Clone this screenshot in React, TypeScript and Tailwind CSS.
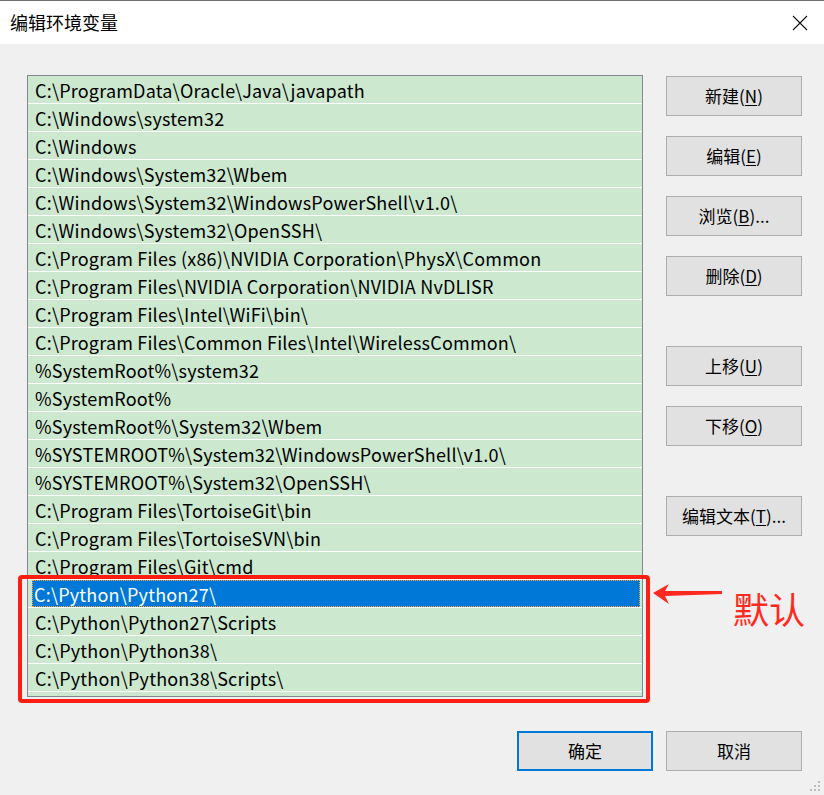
import React from "react";

const paths = [
  "C:\\ProgramData\\Oracle\\Java\\javapath",
  "C:\\Windows\\system32",
  "C:\\Windows",
  "C:\\Windows\\System32\\Wbem",
  "C:\\Windows\\System32\\WindowsPowerShell\\v1.0\\",
  "C:\\Windows\\System32\\OpenSSH\\",
  "C:\\Program Files (x86)\\NVIDIA Corporation\\PhysX\\Common",
  "C:\\Program Files\\NVIDIA Corporation\\NVIDIA NvDLISR",
  "C:\\Program Files\\Intel\\WiFi\\bin\\",
  "C:\\Program Files\\Common Files\\Intel\\WirelessCommon\\",
  "%SystemRoot%\\system32",
  "%SystemRoot%",
  "%SystemRoot%\\System32\\Wbem",
  "%SYSTEMROOT%\\System32\\WindowsPowerShell\\v1.0\\",
  "%SYSTEMROOT%\\System32\\OpenSSH\\",
  "C:\\Program Files\\TortoiseGit\\bin",
  "C:\\Program Files\\TortoiseSVN\\bin",
  "C:\\Program Files\\Git\\cmd",
  "C:\\Python\\Python27\\",
  "C:\\Python\\Python27\\Scripts",
  "C:\\Python\\Python38\\",
  "C:\\Python\\Python38\\Scripts\\",
];

const SELECTED = 18;

function Btn({ label, hot, rest, mt, primary }: { label: string; hot?: string; rest?: string; mt: string; primary?: boolean }) {
  return (
    <button
      className={`${mt} w-[136px] h-[40px] bg-[#e1e1e1] flex items-center justify-center text-[17px] text-black ${
        primary ? "border-2 border-[#0078d7]" : "border border-[#adadad]"
      }`}
    >
      <span>
        {label}
        {hot && (
          <>
            (<span className="underline underline-offset-2">{hot}</span>)
          </>
        )}
        {rest}
      </span>
    </button>
  );
}

export default function App() {
  return (
    <div
      className="relative w-[824px] h-[795px] bg-[#f0f0f0] border-t border-[#707070] overflow-hidden"
      style={{ fontFamily: '"Noto Sans CJK SC", "Noto Sans", sans-serif' }}
    >
      {/* title bar */}
      <div className="h-[43px] bg-white flex items-center justify-between pl-[10px] pr-[16px]">
        <span className="text-[18px] text-black">编辑环境变量</span>
        <svg width="16" height="16" viewBox="0 0 16 16" className="mt-[1px]">
          <path d="M1 1 L15 15 M15 1 L1 15" stroke="#111" strokeWidth="1.1" />
        </svg>
      </div>

      <div className="flex pt-[31px] pl-[27px]">
        <div className="w-[616px] h-[622px] border border-[#828790] bg-[#cce8cf]">
          {paths.map((p, i) => (
            <div key={i} className="h-[28px] px-[1px] border-b border-white">
              {i === SELECTED ? (
                <div className="h-full flex items-center ml-[3px] mr-[1px] pl-[2px] text-[18px] tracking-[0.2px] leading-none bg-[#0078d7] text-white outline-1 outline-dotted outline-[#f5a33c] -outline-offset-1">
                  {p}
                </div>
              ) : (
                <div className="h-full flex items-center pl-[6px] text-[18px] tracking-[0.2px] leading-none text-black">
                  {p}
                </div>
              )}
            </div>
          ))}
        </div>

        <div className="flex flex-col ml-[23px] pt-[1px]">
          <Btn label="新建" hot="N" mt="mt-0" />
          <Btn label="编辑" hot="E" mt="mt-[20px]" />
          <Btn label="浏览" hot="B" rest="..." mt="mt-[20px]" />
          <Btn label="删除" hot="D" mt="mt-[20px]" />
          <Btn label="上移" hot="U" mt="mt-[50px]" />
          <Btn label="下移" hot="O" mt="mt-[20px]" />
          <Btn label="编辑文本" hot="T" rest="..." mt="mt-[50px]" />
        </div>
      </div>

      <div className="flex justify-end gap-[13px] pr-[22px] mt-[34px]">
        <Btn label="确定" mt="mt-0" primary />
        <Btn label="取消" mt="mt-0" />
      </div>

      {/* resize grip */}
      <svg className="absolute right-[3px] bottom-[3px]" width="12" height="12" viewBox="0 0 12 12">
        {[
          [9, 1],
          [5, 5],
          [9, 5],
          [1, 9],
          [5, 9],
          [9, 9],
        ].map(([x, y], i) => (
          <rect key={i} x={x} y={y} width="2" height="2" fill="#bcbcbc" />
        ))}
      </svg>

      {/* annotation: red box, arrow and label */}
      <div className="absolute left-[18px] top-[574px] w-[632px] h-[128px] border-[4px] border-[#ff1e12] rounded-[4px]" />
      <svg className="absolute left-[650px] top-[580px]" width="80" height="28" viewBox="0 0 80 28">
        <polygon points="3,12 19,3 15,10 72,10 72,13 15,15 19,23" fill="#ff2a1f" />
      </svg>
      <div className="absolute left-[733px] top-[589px] text-[36px] leading-none text-[#ff2a1f]">默认</div>
    </div>
  );
}
